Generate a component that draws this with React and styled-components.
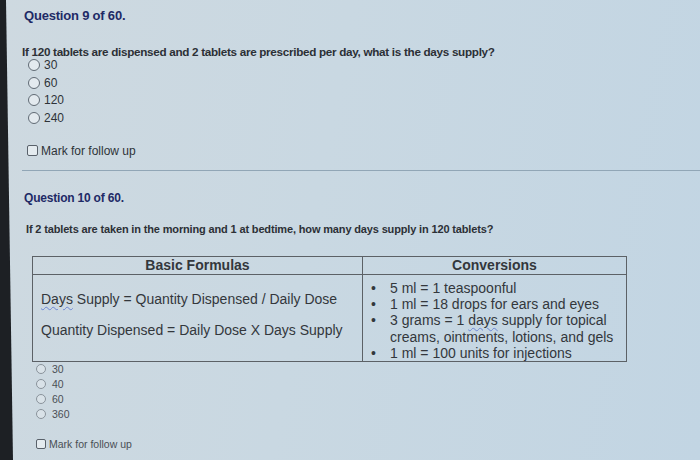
import React from "react"
import styled, { createGlobalStyle } from "styled-components"

const GlobalStyle = createGlobalStyle`
    html, body {
        margin: 0;
        padding: 0;
    }
    body {
        font-family: "Liberation Sans", Arial, sans-serif;
        background: #c9d7e1;
    }
`

const Screen = styled.div`
    width: 700px;
    height: 460px;
    overflow: hidden;
    display: flex;
    background: linear-gradient(100deg, #ced9e0 0%, #c9d8e2 45%, #c2d5e3 100%);
`

const Bezel = styled.div`
    width: 13px;
    flex-shrink: 0;
    background: #1d2024;
    clip-path: polygon(0 0, 6px 0, 13px 100%, 0 100%);
`

const Content = styled.div`
    flex: 1;
    margin-left: -13px;
    display: flex;
    flex-direction: column;
`

const Section = styled.div`
    padding-left: ${({ indent }) => indent}px;
    display: flex;
    flex-direction: column;
`

const Title = styled.div`
    font-weight: bold;
    color: #1e2a66;
    font-size: ${({ size }) => size}px;
    letter-spacing: -0.2px;
    margin-top: ${({ top }) => top}px;
    line-height: 14px;
`

const Prompt = styled.div`
    font-weight: bold;
    color: #2c3036;
    font-size: ${({ size }) => size}px;
    letter-spacing: ${({ spacing }) => spacing}px;
    margin-top: ${({ top }) => top}px;
    margin-left: ${({ shift }) => shift || 0}px;
    line-height: 14px;
`

const Options = styled.div`
    display: flex;
    flex-direction: column;
    margin-top: ${({ top }) => top}px;
    margin-left: ${({ shift }) => shift}px;
`

const Option = styled.label`
    display: flex;
    align-items: center;
    height: ${({ rowHeight }) => rowHeight}px;
    gap: ${({ small }) => (small ? 6 : 4)}px;
    font-size: ${({ small }) => (small ? 10.5 : 12)}px;
    color: ${({ small }) => (small ? "#4a4f55" : "#2e3338")};
`

const Radio = styled.span`
    width: ${({ small }) => (small ? 8 : 10)}px;
    height: ${({ small }) => (small ? 8 : 10)}px;
    border-radius: 50%;
    border: 1px solid ${({ small }) => (small ? "#8a939b" : "#606a74")};
    background: ${({ small }) => (small ? "#d9e2e8" : "#e3eaef")};
    flex-shrink: 0;
`

const FollowUp = styled.label`
    display: flex;
    align-items: center;
    gap: 3px;
    margin-top: ${({ top }) => top}px;
    margin-left: ${({ shift }) => shift}px;
    font-size: ${({ small }) => (small ? 10.5 : 12)}px;
    color: ${({ small }) => (small ? "#4a4f55" : "#2e3338")};
`

const Box = styled.span`
    width: ${({ small }) => (small ? 8 : 9)}px;
    height: ${({ small }) => (small ? 8 : 9)}px;
    border: 1px solid #59616a;
    border-radius: 2px;
    background: #e4ebef;
`

const Divider = styled.div`
    height: 1px;
    background: #91a6b6;
    margin: 12px 0 0 22px;
`

const Table = styled.div`
    margin: 20px 0 0 32px;
    width: 593px;
    display: grid;
    grid-template-columns: 330px 1fr;
    grid-template-rows: 18px 1fr;
    border: 1px solid #5c6166;
    color: #33373c;
`

const HeadCell = styled.div`
    font-weight: bold;
    font-size: 14px;
    text-align: center;
    line-height: 17px;
    border-bottom: 1px solid #5c6166;
    border-right: ${({ divide }) => (divide ? "1px solid #5c6166" : "none")};
`

const FormulaCell = styled.div`
    border-right: 1px solid #5c6166;
    padding: 16px 0 0 8px;
    display: flex;
    flex-direction: column;
    gap: 15px;
    font-size: 14px;
    line-height: 16px;
`

const ConversionList = styled.ul`
    list-style: none;
    margin: 5px 0 0 0;
    padding: 0 0 0 8px;
    font-size: 14px;
    line-height: 16.3px;
`

const ConversionItem = styled.li`
    display: flex;
    gap: 13px;

    &::before {
        content: "•";
        width: 6px;
        flex-shrink: 0;
    }
`

const Squiggle = styled.span`
    text-decoration: underline wavy #6b86d6;
    text-decoration-thickness: 1px;
    text-underline-offset: 2px;
`

const q9Options = ["30", "60", "120", "240"]
const q10Options = ["30", "40", "60", "360"]

const conversions = [
    "5 ml = 1 teaspoonful",
    "1 ml = 18 drops for ears and eyes",
    <>3 grams = 1 <Squiggle>days</Squiggle> supply for topical<br />creams, ointments, lotions, and gels</>,
    "1 ml = 100 units for injections",
]

const App = () => {
    return (
        <>
            <GlobalStyle />
            <Screen>
                <Bezel />
                <Content>
                    <Section indent={24}>
                        <Title size={13} top={9}>Question 9 of 60.</Title>
                        <Prompt size={11.7} spacing={-0.3} top={22} shift={-2}>
                            If 120 tablets are dispensed and 2 tablets are prescribed per day, what is the days supply?
                        </Prompt>
                        <Options top={-3} shift={4}>
                            {q9Options.map((opt) => (
                                <Option key={opt} rowHeight={17.7}>
                                    <Radio />
                                    {opt}
                                </Option>
                            ))}
                        </Options>
                        <FollowUp top={17} shift={3}>
                            <Box />
                            Mark for follow up
                        </FollowUp>
                    </Section>

                    <Divider />

                    <Section indent={24}>
                        <Title size={12} top={20}>Question 10 of 60.</Title>
                        <Prompt size={11} spacing={-0.15} top={17} shift={2}>
                            If 2 tablets are taken in the morning and 1 at bedtime, how many days supply in 120 tablets?
                        </Prompt>
                    </Section>

                    <Table>
                        <HeadCell divide>Basic Formulas</HeadCell>
                        <HeadCell>Conversions</HeadCell>
                        <FormulaCell>
                            <div><Squiggle>Days</Squiggle> Supply = Quantity Dispensed / Daily Dose</div>
                            <div>Quantity Dispensed = Daily Dose X Days Supply</div>
                        </FormulaCell>
                        <ConversionList>
                            {conversions.map((item, index) => (
                                <ConversionItem key={index}>
                                    <span>{item}</span>
                                </ConversionItem>
                            ))}
                        </ConversionList>
                    </Table>

                    <Section indent={36}>
                        <Options top={-1} shift={0}>
                            {q10Options.map((opt) => (
                                <Option key={opt} rowHeight={15} small>
                                    <Radio small />
                                    {opt}
                                </Option>
                            ))}
                        </Options>
                        <FollowUp top={17} shift={0} small>
                            <Box small />
                            Mark for follow up
                        </FollowUp>
                    </Section>
                </Content>
            </Screen>
        </>
    )
}

export default App
